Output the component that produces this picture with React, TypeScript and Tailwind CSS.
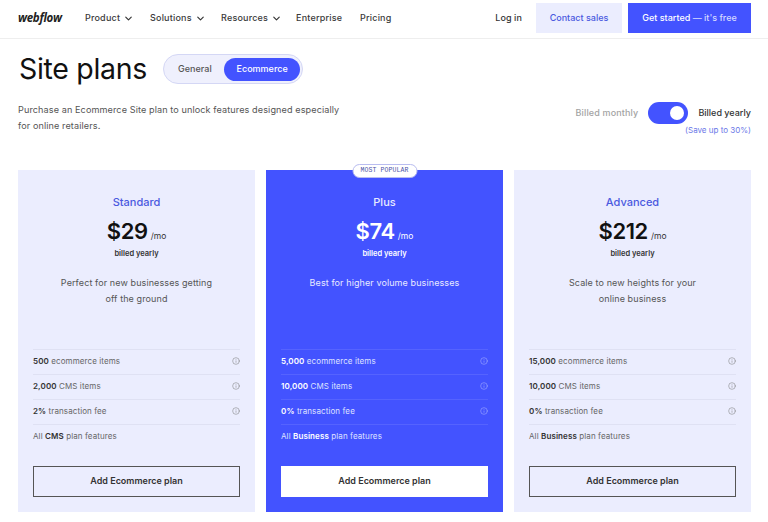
import React from "react";
import { ChevronDown, Info } from "lucide-react";

const plans = [
  {
    name: "Standard",
    price: "$29",
    desc: ["Perfect for new businesses getting", "off the ground"],
    rows: [
      ["500", "ecommerce items"],
      ["2,000", "CMS items"],
      ["2%", "transaction fee"],
    ],
    all: "CMS",
  },
  {
    name: "Plus",
    price: "$74",
    desc: ["Best for higher volume businesses"],
    rows: [
      ["5,000", "ecommerce items"],
      ["10,000", "CMS items"],
      ["0%", "transaction fee"],
    ],
    all: "Business",
    featured: true,
  },
  {
    name: "Advanced",
    price: "$212",
    desc: ["Scale to new heights for your", "online business"],
    rows: [
      ["15,000", "ecommerce items"],
      ["10,000", "CMS items"],
      ["0%", "transaction fee"],
    ],
    all: "Business",
  },
];

const NavItem = ({ label, caret }: { label: string; caret?: boolean }) => (
  <a className="flex items-center gap-[3px] text-[9px] font-medium tracking-[0.2px] text-[#3a3a3a]">
    {label}
    {caret && <ChevronDown size={11} strokeWidth={2.5} className="text-[#333]" />}
  </a>
);

const PlanCard = ({ plan }: { plan: (typeof plans)[number] }) => {
  const featured = plan.featured;
  return (
    <div className={`relative flex h-[342px] flex-col px-[15px] ${featured ? "bg-[#4353ff] text-white" : "bg-[#ebedfe] text-[#333]"}`}>
      {featured && (
        <div className="absolute left-1/2 top-[-6px] flex h-[14px] w-[65px] -translate-x-1/2 items-center justify-center rounded-full border border-[#b9bdf0] bg-white font-['Liberation_Mono',monospace] text-[6.5px] tracking-[0.1px] text-[#4d55a8]">
          MOST POPULAR
        </div>
      )}
      <div className={`mt-[25px] text-center text-[11px] font-medium leading-[14px] ${featured ? "text-[#e8eaff]" : "text-[#4a59e0]"}`}>
        {plan.name}
      </div>
      <div className="mt-[8px] flex h-[28px] items-end justify-center">
        <span className={`text-[22px] font-semibold leading-[28px] tracking-[-0.4px] ${featured ? "text-white" : "text-[#111]"}`}>{plan.price}</span>
        <span className="mb-[3px] ml-[3px] text-[8.5px] leading-[12px]">/mo</span>
      </div>
      <div className="mt-[2px] text-center text-[7.5px] font-semibold leading-[14px]">billed yearly</div>
      <div className={`mt-[14px] h-[74px] text-center text-[9px] leading-[16px] tracking-[0.1px] ${featured ? "text-[#e8eaff]" : "text-[#555]"}`}>
        {plan.desc.map((line) => (
          <div key={line}>{line}</div>
        ))}
      </div>
      <div className={`text-[8px] tracking-[0.1px] ${featured ? "text-[#dfe2ff]" : "text-[#666]"}`}>
        {plan.rows.map(([count, label]) => (
          <div key={label} className={`flex h-[25px] items-center justify-between border-t pb-[2px] ${featured ? "border-[#5563ff]" : "border-[#dfe1f3]"}`}>
            <span>
              <b className={`font-semibold ${featured ? "text-white" : "text-[#333]"}`}>{count}</b> {label}
            </span>
            <Info size={8} strokeWidth={1.5} className={featured ? "text-[#b3baff]" : "text-[#777]"} />
          </div>
        ))}
        <div className={`flex h-[25px] items-center border-t pb-[2px] ${featured ? "border-[#5563ff]" : "border-[#dfe1f3]"}`}>
          <span>
            All <b className={`font-semibold ${featured ? "text-white" : "text-[#333]"}`}>{plan.all}</b> plan features
          </span>
        </div>
      </div>
      <button className={`mt-[17px] h-[31px] w-full pb-[1px] text-[9px] font-semibold text-[#333] ${featured ? "bg-white" : "border border-[#555]"}`}>
        Add Ecommerce plan
      </button>
    </div>
  );
};

export default function App() {
  return (
    <div className="h-[522px] w-[768px] overflow-hidden bg-white font-['Inter',sans-serif]">
      {/* Nav */}
      <header className="flex h-[39px] items-center border-b border-[#eeeeee] pb-[2px] pl-[18px] pr-[17px]">
        <span className="w-[67px] font-['Open_Sans',sans-serif] text-[11.5px] font-bold italic tracking-[-0.3px] text-[#222]">webflow</span>
        <nav className="flex items-center">
          <div className="w-[65px]"><NavItem label="Product" caret /></div>
          <div className="w-[71px]"><NavItem label="Solutions" caret /></div>
          <div className="w-[75px]"><NavItem label="Resources" caret /></div>
          <div className="w-[64px]"><NavItem label="Enterprise" /></div>
          <NavItem label="Pricing" />
        </nav>
        <div className="ml-auto flex items-center">
          <span className="mr-[14px] text-[9px] font-medium tracking-[0.1px] text-[#333]">Log in</span>
          <button className="mr-[6px] h-[30px] w-[86px] bg-[#ebedfe] text-[9px] font-medium text-[#4a59e0]">Contact sales</button>
          <button className="h-[30px] w-[123px] bg-[#4353ff] text-[9px] font-medium text-white">
            Get started <span className="text-[#d5d9ff]">— it's free</span>
          </button>
        </div>
      </header>

      <main className="pl-[18px] pr-[17px]">
        <div className="flex h-[60px] items-center pl-[1px]">
          <h1 className="text-[28.5px] leading-[36px] tracking-[-0.3px] text-[#111]">Site plans</h1>
          <div className="ml-[16px] flex h-[30px] w-[140px] items-center justify-between rounded-full border border-[#d4d7f5] bg-[#eff0fd] pl-[14px] pr-[2px]">
            <span className="text-[9px] font-medium text-[#555]">General</span>
            <span className="flex h-[23px] w-[76px] items-center justify-center rounded-full bg-[#4353ff] text-[9px] font-medium text-white">Ecommerce</span>
          </div>
        </div>

        <div className="mt-[2px] flex h-[67px] justify-between">
          <p className="mt-[1px] w-[325px] text-[9.1px] leading-[16px] tracking-[0.1px] text-[#555]">
            Purchase an Ecommerce Site plan to unlock features designed especially for online retailers.
          </p>
          <div className="flex flex-col items-end">
            <div className="mt-[1px] flex items-center">
              <span className="text-[9px] font-medium tracking-[0.15px] text-[#a3a3a3]">Billed monthly</span>
              <div className="ml-[10px] mr-[10px] flex h-[22px] w-[40px] items-center justify-end rounded-full bg-[#4353ff] pr-[4px]">
                <div className="h-[14px] w-[14px] rounded-full bg-white" />
              </div>
              <span className="text-[9px] font-medium text-[#333]">Billed yearly</span>
            </div>
            <span className="text-[8px] text-[#6b78e8]">(Save up to 30%)</span>
          </div>
        </div>

        <div className="mt-[2px] grid grid-cols-3 gap-[11px]">
          {plans.map((plan) => (
            <PlanCard key={plan.name} plan={plan} />
          ))}
        </div>
      </main>
    </div>
  );
}
